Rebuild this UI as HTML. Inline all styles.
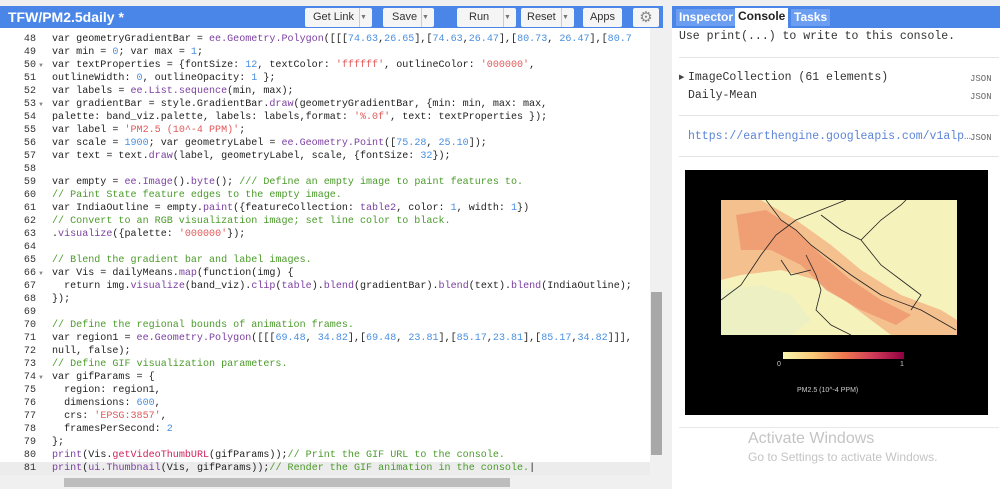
<!DOCTYPE html><html><head><style>
*{margin:0;padding:0;box-sizing:border-box}
body{width:1000px;height:489px;background:#f0f0f0;position:relative;overflow:hidden;font-family:"Liberation Sans",sans-serif}
.bar{position:absolute;top:6px;height:22px;background:#4a86e8}
.title{position:absolute;left:8px;top:9px;color:#fff;font-weight:bold;font-size:14px}
.btn{position:absolute;top:8px;height:19px;background:#f5f5f5;border-radius:2px;font-size:11px;color:#333;line-height:19px;text-align:center}
.dd{position:absolute;top:0;right:0;width:13px;height:19px;border-left:1px solid #ccc;font-size:7px;color:#777}
#ed{position:absolute;left:0;top:28px;width:663px;height:461px;background:#fff}
.ln{position:absolute;left:0;width:36px;text-align:right;font:10.07px/13px "Liberation Mono",monospace;color:#333}
.fm{position:absolute;left:38px;font-size:6px;color:#888}
.cd{position:absolute;left:52px;font:10.07px/13px "Liberation Mono",monospace;color:#222;white-space:pre}
.m{color:#7b3fa0}.n{color:#4a8fe0}.s{color:#e05a5a}.c{color:#4b9b2b}
#rp{position:absolute;left:672px;top:28px;width:328px;height:461px;background:#fff}
.tab{position:absolute;top:9px;height:17px;font-size:12px;font-weight:bold;color:#fff;line-height:17px;padding:0 3px;background:#6b9ef0}
.mono{font-family:"Liberation Mono",monospace;font-size:11.5px;position:absolute;white-space:pre}
.js{position:absolute;left:970px;font-size:9px;color:#666;font-family:"Liberation Mono",monospace}
</style></head><body>
<div class="bar" style="left:0;width:663px"></div>
<div class="title">TFW/PM2.5daily *</div>
<div class="btn" style="left:305px;width:67px;text-align:left;padding-left:8px">Get Link<div class="dd">▼</div></div>
<div class="btn" style="left:383px;width:51px;text-align:left;padding-left:9px">Save<div class="dd">▼</div></div>
<div class="btn" style="left:457px;width:59px;text-align:left;padding-left:12px">Run<div class="dd">▼</div></div>
<div class="btn" style="left:521px;width:53px;text-align:left;padding-left:6px">Reset<div class="dd">▼</div></div>
<div class="btn" style="left:583px;width:39px">Apps</div>
<div class="btn" style="left:633px;width:26px;font-size:15px;color:#888">⚙</div>
<div id="ed">
<div style="position:absolute;left:0;top:434px;width:650px;height:13px;background:#ececec"></div>
<div class="ln" style="top:5px">48<br>49<br>50<br>51<br>52<br>53<br>54<br>55<br>56<br>57<br>58<br>59<br>60<br>61<br>62<br>63<br>64<br>65<br>66<br>67<br>68<br>69<br>70<br>71<br>72<br>73<br>74<br>75<br>76<br>77<br>78<br>79<br>80<br>81</div>
<div class="fm" style="top:35px">▼</div><div class="fm" style="top:74px">▼</div><div class="fm" style="top:243px">▼</div><div class="fm" style="top:347px">▼</div>
<div class="cd" style="top:5px">var geometryGradientBar = <span class="m">ee.Geometry.Polygon</span>([[[<span class="n">74.63</span>,<span class="n">26.65</span>],[<span class="n">74.63</span>,<span class="n">26.47</span>],[<span class="n">80.73</span>, <span class="n">26.47</span>],[<span class="n">80.7</span>
var min = <span class="n">0</span>; var max = <span class="n">1</span>;
var textProperties = {fontSize: <span class="n">12</span>, textColor: <span class="s">'ffffff'</span>, outlineColor: <span class="s">'000000'</span>,
outlineWidth: <span class="n">0</span>, outlineOpacity: <span class="n">1</span> };
var labels = <span class="m">ee.List.sequence</span>(min, max);
var gradientBar = style.GradientBar.<span class="m">draw</span>(geometryGradientBar, {min: min, max: max,
palette: band_viz.palette, labels: labels,format: <span class="s">'%.0f'</span>, text: textProperties });
var label = <span class="s">'PM2.5 (10^-4 PPM)'</span>;
var scale = <span class="n">1900</span>; var geometryLabel = <span class="m">ee.Geometry.Point</span>([<span class="n">75.28</span>, <span class="n">25.10</span>]);
var text = text.<span class="m">draw</span>(label, geometryLabel, scale, {fontSize: <span class="n">32</span>});

var empty = <span class="m">ee.Image</span>().<span class="m">byte</span>(); <span class="c">/// Define an empty image to paint features to.</span>
<span class="c">// Paint State feature edges to the empty image.</span>
var IndiaOutline = empty.<span class="m">paint</span>({featureCollection: <span class="m">table2</span>, color: <span class="n">1</span>, width: <span class="n">1</span>})
<span class="c">// Convert to an RGB visualization image; set line color to black.</span>
.<span class="m">visualize</span>({palette: <span class="s">'000000'</span>});

<span class="c">// Blend the gradient bar and label images.</span>
var Vis = dailyMeans.<span class="m">map</span>(function(img) {
  return img.<span class="m">visualize</span>(band_viz).<span class="m">clip</span>(<span class="m">table</span>).<span class="m">blend</span>(gradientBar).<span class="m">blend</span>(text).<span class="m">blend</span>(IndiaOutline);
});

<span class="c">// Define the regional bounds of animation frames.</span>
var region1 = <span class="m">ee.Geometry.Polygon</span>([[[<span class="n">69.48</span>, <span class="n">34.82</span>],[<span class="n">69.48</span>, <span class="n">23.81</span>],[<span class="n">85.17</span>,<span class="n">23.81</span>],[<span class="n">85.17</span>,<span class="n">34.82</span>]]],
null, false);
<span class="c">// Define GIF visualization parameters.</span>
var gifParams = {
  region: region1,
  dimensions: <span class="n">600</span>,
  crs: <span class="s">'EPSG:3857'</span>,
  framesPerSecond: <span class="n">2</span>
};
<span class="m">print</span>(Vis.<span class="m" style="color:#d0205a">getVideoThumbURL</span>(gifParams));<span class="c">// Print the GIF URL to the console.</span>
<span class="m">print</span>(<span class="m">ui.Thumbnail</span>(Vis, gifParams));<span class="c">// Render the GIF animation in the console.</span>|</div>
<div style="position:absolute;left:650px;top:0;width:13px;height:461px;background:#f0f0f0"></div>
<div style="position:absolute;left:651px;top:264px;width:11px;height:163px;background:#a8a8a8"></div>
<div style="position:absolute;left:0;top:447px;width:650px;height:14px;background:#f0f0f0"></div>
<div style="position:absolute;left:64px;top:450px;width:446px;height:9px;background:#bdbdbd"></div>
</div>
<div class="bar" style="left:672px;width:328px"></div>
<div class="tab" style="left:676px">Inspector</div>
<div class="tab" style="left:735px;background:#fff;color:#222;top:8px;height:20px">Console</div>
<div class="tab" style="left:791px">Tasks</div>
<div id="rp"></div>
<div class="mono" style="left:679px;top:30px;color:#333">Use print(...) to write to this console.</div>
<div style="position:absolute;left:679px;top:57px;width:320px;height:1px;background:#e4e4e4"></div>
<div style="position:absolute;left:679px;top:73px;font-size:7px;color:#444">▶</div>
<div class="mono" style="left:688px;top:71px;color:#333">ImageCollection (61 elements)</div>
<div class="js" style="top:74px">JSON</div>
<div class="mono" style="left:688px;top:89px;color:#333">Daily-Mean</div>
<div class="js" style="top:92px">JSON</div>
<div style="position:absolute;left:679px;top:115px;width:320px;height:1px;background:#e4e4e4"></div>
<div class="mono" style="left:688px;top:130px;color:#5c85d6">https://earthengine.googleapis.com/v1alp…</div>
<div class="js" style="top:133px">JSON</div>
<div style="position:absolute;left:679px;top:156px;width:320px;height:1px;background:#e4e4e4"></div>
<div style="position:absolute;left:685px;top:170px;width:303px;height:245px;background:#000"></div>
<svg style="position:absolute;left:721px;top:200px" width="236" height="135" viewBox="0 0 236 135">
<rect width="236" height="135" fill="#f6f2bc"/>
<path d="M0 0H40L75 20L110 45L140 70L180 95L220 110L236 120V135H170L130 105L95 80L60 70L20 75L0 80Z" fill="#f4c08e"/>
<path d="M15 15L45 10L75 30L100 55L130 80L160 100L190 115L175 125L140 110L105 90L80 65L50 50L20 50Z" fill="#ee9870" opacity=".85"/>
<path d="M0 90L40 85L70 95L90 120L70 135H0Z" fill="#ecf0c2"/>
<path d="M45 0L60 20L75 30L90 45L110 60L130 75L160 95L200 110L235 130M0 100L20 85L40 55L55 35L75 20L100 10L125 0M100 15L120 30L140 40L160 20L180 5L185 0M140 40L160 65L180 80L200 95L190 110M85 55L95 75L100 90L95 110L110 125L130 135M60 60L70 75L90 70" fill="none" stroke="#222" stroke-width=".8"/>
</svg>
<div style="position:absolute;left:783px;top:352px;width:121px;height:7px;background:linear-gradient(90deg,#f8f6b0,#f8c878,#ee7a50,#d03a58,#900040)"></div>
<div style="position:absolute;left:777px;top:361px;font-size:7px;color:#ccc">0</div>
<div style="position:absolute;left:900px;top:361px;font-size:7px;color:#ccc">1</div>
<div style="position:absolute;left:797px;top:387px;font-size:7px;color:#ccc">PM2.5 (10^-4 PPM)</div>
<div style="position:absolute;left:679px;top:427px;width:320px;height:1px;background:#e8e8e8"></div>
<div style="position:absolute;left:748px;top:430px;font-size:16px;color:#c4c4c4">Activate Windows</div>
<div style="position:absolute;left:748px;top:450px;font-size:12px;color:#c4c4c4">Go to Settings to activate Windows.</div>
</body></html>
